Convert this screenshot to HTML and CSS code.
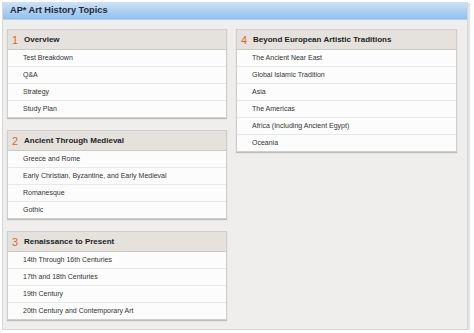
FILE: index.html
```html
<!DOCTYPE html>
<html>
<head>
<meta charset="utf-8">
<link rel="stylesheet" href="styles.css">
</head>
<body>
<div class="panel">
  <div class="panel-head">AP* Art History Topics</div>
  <div class="panel-body">
    <div class="col">
      <div class="card">
        <div class="card-head"><span class="num">1</span><span class="title">Overview</span></div>
        <ul class="items">
          <li>Test Breakdown</li>
          <li>Q&amp;A</li>
          <li>Strategy</li>
          <li>Study Plan</li>
        </ul>
      </div>
      <div class="card">
        <div class="card-head"><span class="num">2</span><span class="title">Ancient Through Medieval</span></div>
        <ul class="items">
          <li>Greece and Rome</li>
          <li>Early Christian, Byzantine, and Early Medieval</li>
          <li>Romanesque</li>
          <li>Gothic</li>
        </ul>
      </div>
      <div class="card">
        <div class="card-head"><span class="num">3</span><span class="title">Renaissance to Present</span></div>
        <ul class="items">
          <li>14th Through 16th Centuries</li>
          <li>17th and 18th Centuries</li>
          <li>19th Century</li>
          <li>20th Century and Contemporary Art</li>
        </ul>
      </div>
    </div>
    <div class="col">
      <div class="card">
        <div class="card-head"><span class="num">4</span><span class="title">Beyond European Artistic Traditions</span></div>
        <ul class="items">
          <li>The Ancient Near East</li>
          <li>Global Islamic Tradition</li>
          <li>Asia</li>
          <li>The Americas</li>
          <li>Africa (Including Ancient Egypt)</li>
          <li>Oceania</li>
        </ul>
      </div>
    </div>
  </div>
</div>
</body>
</html>
```

FILE: styles.css
```css
html, body {
  margin: 0;
  padding: 0;
  background: #ffffff;
}
body {
  font-family: "Liberation Sans", Arial, sans-serif;
  padding: 2px 0 0 2px;
}
.panel {
  width: 464px;
  border: 1px solid #d6d6d6;
  border-top: none;
  box-shadow: 2px 1px 1px #e4e4e4;
  background: #efeeec;
}
.panel-head {
  height: 17px;
  line-height: 17px;
  padding-left: 7px;
  background: linear-gradient(#cde2f6, #93bfee);
  border-bottom: 1px solid #b4cfe9;
  font-size: 9.2px;
  font-weight: bold;
  color: #1e2a36;
}
.panel-body {
  display: grid;
  grid-template-columns: 220px 221px;
  column-gap: 9px;
  padding: 9px 10px 9px 4px;
  align-items: start;
}
.col {
  display: flex;
  flex-direction: column;
  gap: 12px;
}
.card {
  background: #fcfcfc;
  border: 1px solid #cfcfcf;
  box-shadow: 0 1px 1px #bdbdbd;
}
.card-head {
  height: 19px;
  display: flex;
  align-items: center;
  background: #e5e2dd;
  border-bottom: 1px solid #cdcac5;
  padding-left: 4px;
}
.num {
  font-size: 11px;
  color: #e4652b;
  width: 12px;
}
.title {
  font-size: 8px;
  font-weight: bold;
  color: #222222;
}
.items {
  list-style: none;
  margin: 0;
  padding: 0;
}
.items li {
  height: 16px;
  line-height: 15px;
  padding-left: 15px;
  font-size: 7px;
  color: #333333;
  border-top: 1px solid #e8e8e8;
}
.items li:first-child {
  border-top: none;
  line-height: 16px;
}
```
